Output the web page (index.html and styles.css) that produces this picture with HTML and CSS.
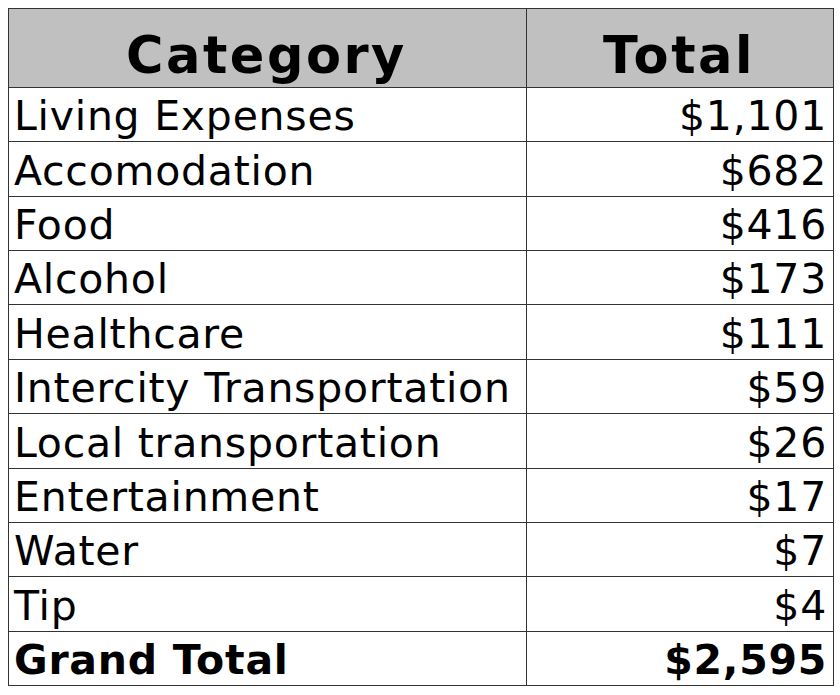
FILE: index.html
```html
<!DOCTYPE html>
<html>
<head>
<meta charset="utf-8">
<link rel="stylesheet" href="styles.css">
</head>
<body>
<table class="expenses">
  <colgroup><col class="c1"><col class="c2"></colgroup>
  <thead>
    <tr><th>Category</th><th>Total</th></tr>
  </thead>
  <tbody>
    <tr><td>Living Expenses</td><td class="num">$1,101</td></tr>
    <tr><td>Accomodation</td><td class="num">$682</td></tr>
    <tr><td>Food</td><td class="num">$416</td></tr>
    <tr><td>Alcohol</td><td class="num">$173</td></tr>
    <tr><td>Healthcare</td><td class="num">$111</td></tr>
    <tr><td>Intercity Transportation</td><td class="num">$59</td></tr>
    <tr><td>Local transportation</td><td class="num">$26</td></tr>
    <tr><td>Entertainment</td><td class="num">$17</td></tr>
    <tr><td>Water</td><td class="num">$7</td></tr>
    <tr><td>Tip</td><td class="num">$4</td></tr>
    <tr class="grand"><td>Grand Total</td><td class="num">$2,595</td></tr>
  </tbody>
</table>
</body>
</html>
```
FILE: styles.css
```css
html, body { margin: 0; padding: 0; background: #fff; }
body { padding: 8px; }
.expenses {
  border-collapse: collapse;
  table-layout: fixed;
  width: 825px;
  font-family: "DejaVu Sans", Verdana, sans-serif;
  color: #000;
}
.expenses .c1 { width: 518px; }
.expenses .c2 { width: 307px; }
.expenses th, .expenses td {
  border: 1.5px solid #333;
  padding: 0 7px 0 5px;
  white-space: nowrap;
  overflow: hidden;
  box-sizing: border-box;
}
.expenses th {
  background: #c0c0c0;
  height: 79px;
  font-size: 51px;
  font-weight: bold;
  letter-spacing: 2.5px;
  text-align: center;
  vertical-align: bottom;
  line-height: 1;
  padding-bottom: 6px;
}
.expenses td {
  height: 54.36px;
  font-size: 41px;
  letter-spacing: 0.75px;
  line-height: 1;
  vertical-align: bottom;
  padding-bottom: 4px;
}
.expenses td.num { text-align: right; padding-right: 6px; }
.expenses tr.grand td { font-weight: bold; }
```
